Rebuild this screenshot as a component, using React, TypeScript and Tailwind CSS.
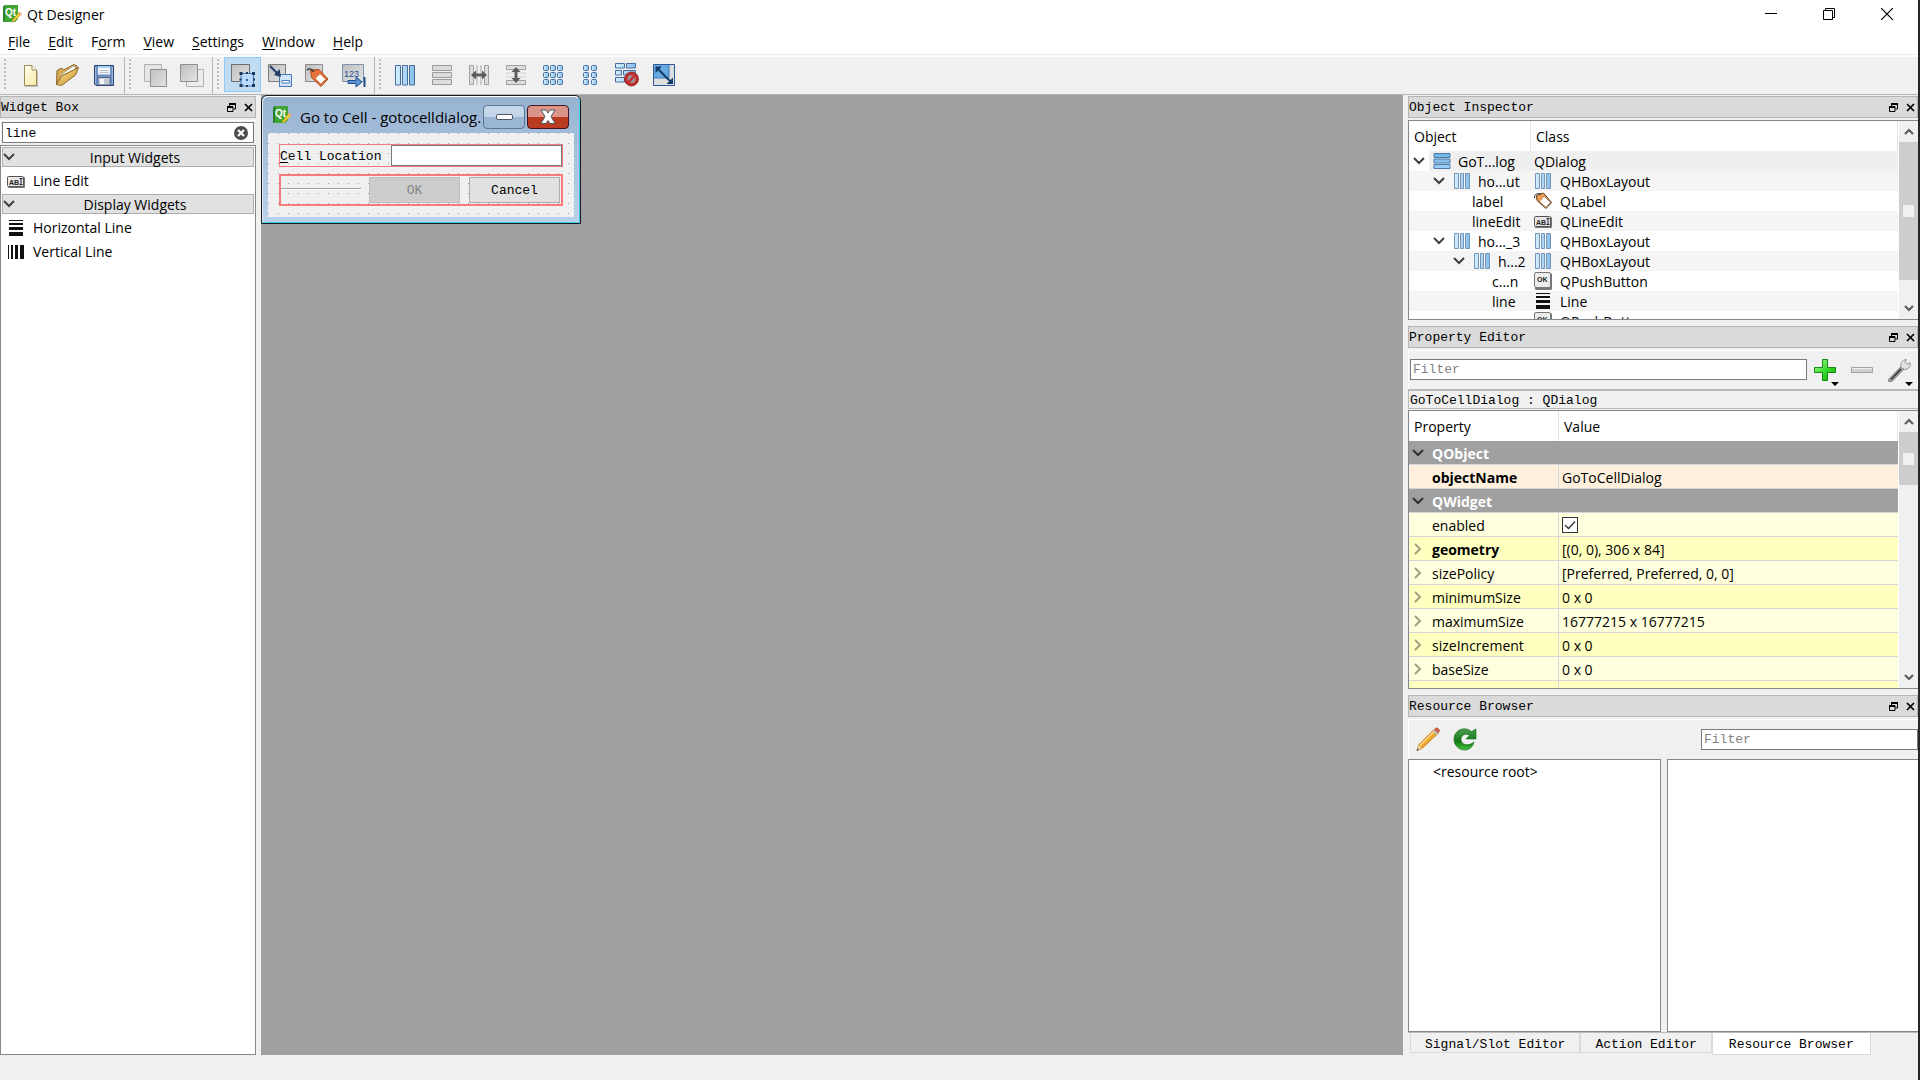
import { ReactNode, useState } from 'react';
import clsx from 'clsx';

const MONO = "font-['Liberation_Mono',monospace] text-[13px]";

const MENUS = [
  ['', 'F', 'ile'],
  ['', 'E', 'dit'],
  ['F', 'o', 'rm'],
  ['', 'V', 'iew'],
  ['', 'S', 'ettings'],
  ['', 'W', 'indow'],
  ['', 'H', 'elp'],
];

type TreeNode = {
  name: string;
  className: string;
  depth: number;
  open?: boolean;
  nameIcon?: ReactNode;
  classIcon?: ReactNode;
};

type Property = {
  name: string;
  value?: string;
  kind: 'group' | 'object' | 'light' | 'dark';
  bold?: boolean;
  expandable?: boolean;
  checkbox?: boolean;
};

const PROPERTIES: Property[] = [
  { name: 'QObject', kind: 'group' },
  { name: 'objectName', value: 'GoToCellDialog', kind: 'object', bold: true },
  { name: 'QWidget', kind: 'group' },
  { name: 'enabled', kind: 'light', checkbox: true },
  { name: 'geometry', value: '[(0, 0), 306 x 84]', kind: 'dark', bold: true, expandable: true },
  { name: 'sizePolicy', value: '[Preferred, Preferred, 0, 0]', kind: 'light', expandable: true },
  { name: 'minimumSize', value: '0 x 0', kind: 'dark', expandable: true },
  { name: 'maximumSize', value: '16777215 x 16777215', kind: 'light', expandable: true },
  { name: 'sizeIncrement', value: '0 x 0', kind: 'dark', expandable: true },
  { name: 'baseSize', value: '0 x 0', kind: 'light', expandable: true },
  { name: '', value: '', kind: 'dark' },
];

/* Icons */

const Gradients = () => (
  <svg className="absolute size-0" aria-hidden="true">
    <defs>
      <linearGradient id="blue" x1="0" x2="1" y1="0" y2="0">
        <stop offset="0" stopColor="#d5f0ff" />
        <stop offset="1" stopColor="#85bdea" />
      </linearGradient>
      <linearGradient id="blueDown" x1="0" x2="0" y1="0" y2="1">
        <stop offset="0" stopColor="#6eb4e8" />
        <stop offset="1" stopColor="#9fd2f6" />
      </linearGradient>
      <linearGradient id="gray" x1="0" x2="1" y1="0" y2="1">
        <stop offset="0" stopColor="#bfbfbf" />
        <stop offset="1" stopColor="#e3e3e3" />
      </linearGradient>
      <linearGradient id="page" x1="0" x2="1" y1="0" y2="1">
        <stop offset="0" stopColor="#fffef2" />
        <stop offset="1" stopColor="#f7e8a2" />
      </linearGradient>
      <linearGradient id="gold" x1="0" x2="1" y1="0" y2="1">
        <stop offset="0" stopColor="#f5d98b" />
        <stop offset="1" stopColor="#cf9a35" />
      </linearGradient>
      <linearGradient id="green" x1="0" x2="1" y1="0" y2="1">
        <stop offset="0" stopColor="#b6f7a0" />
        <stop offset="0.5" stopColor="#3fdc30" />
        <stop offset="1" stopColor="#00a800" />
      </linearGradient>
      <linearGradient id="reload" x1="0" x2="0" y1="0" y2="1">
        <stop offset="0" stopColor="#4f9b52" />
        <stop offset="0.6" stopColor="#117a17" />
        <stop offset="1" stopColor="#45c43c" />
      </linearGradient>
    </defs>
  </svg>
);

const Icon = ({ children, size = 24 }: { children: ReactNode; size?: number }) => (
  <svg width={size} height={size} viewBox={`0 0 ${size} ${size}`} fill="none" className="shrink-0" aria-hidden="true">
    {children}
  </svg>
);

const QtIcon = () => (
  <Icon size={20}>
    <path d="M3 1H16V15L13 18H1V3Z" fill="#41a536" />
    <path d="M1 3L3 1V16L1 18Z" fill="#2c7d26" />
    <text x="3" y="12" fontSize="10" fontWeight="bold" fill="#fff" fontFamily="Liberation Sans">
      Qt
    </text>
    <path d="M17.500 8L19.500 10L12.500 17L10 18L11 15.500Z" fill="#f5cf3a" stroke="#c99a1a" strokeWidth=".6" />
    <path d="M17.500 8L19.500 10L18.500 11L16.500 9Z" fill="#e8a0a0" />
  </Icon>
);

const NewIcon = () => (
  <Icon>
    <path d="M6.500 2.500H14L18.500 7V22.500H6.500Z" fill="url(#page)" stroke="#9b8a58" />
    <path d="M14 2.500V7H18.500" fill="#fffdf0" stroke="#9b8a58" />
    <path d="M7 23.500H19.500V8" stroke="#000" strokeOpacity=".2" />
  </Icon>
);

const OpenIcon = () => (
  <Icon>
    <path d="M1.500 21L2 7.500L6.500 5L8.500 7L19 1.500L22 3V8L6 21Z" fill="#d7aa50" stroke="#8a6425" />
    <path d="M6 12L18 3L20.500 4V9L7 19Z" fill="#f8f8f4" stroke="#a7a394" strokeWidth=".8" />
    <path d="M1.500 21.500L6.500 13L23.500 4.500L20.500 12L6.500 22.500Z" fill="url(#gold)" stroke="#8a6425" />
  </Icon>
);

const SaveIcon = () => (
  <Icon>
    <path d="M2.500 2.500H21.500V22.500H4L2.500 21Z" fill="#6d8fc4" stroke="#2c4270" />
    <path d="M6 3H18V11.500H6Z" fill="#f2f6fa" />
    <path d="M6 3H18V5H6Z" fill="#a9d7ee" />
    <path d="M7.500 7.500H16.500M7.500 9.500H16.500" stroke="#b8c2cf" />
    <path d="M6 14.500H18V22H6Z" fill="#c4cad4" stroke="#3a4f7c" strokeWidth=".7" />
    <path d="M8 16H12V21H8Z" fill="#f6f7f9" />
    <path d="M3.500 4V20.500M20.500 4V21" stroke="#9cb8e2" />
  </Icon>
);

const LowerIcon = () => (
  <Icon>
    <path d="M1.500 1.500H18.500V18.500H1.500Z" fill="#e6e6e6" stroke="#b1b1b1" />
    <path d="M7.500 6.500H23.500V23.500H7.500Z" fill="url(#gray)" stroke="#909090" />
  </Icon>
);

const RaiseIcon = () => (
  <Icon>
    <path d="M6.500 6.500H23.500V23.500H6.500Z" fill="#ececec" stroke="#b1b1b1" />
    <path d="M.5 1.500H17.500V18.500H.5Z" fill="url(#gray)" stroke="#909090" />
  </Icon>
);

const EditWidgetsIcon = () => (
  <Icon>
    <path d="M.5 1.500H18.500V18.500H.5Z" fill="url(#gray)" stroke="#6d6d6d" />
    <path d="M10 10.500H22.500V23H10Z" fill="#b9d9fb" stroke="#3f79c0" />
    <path
      d="M8.500 9h3v3h-3zM15 9h2v2h-2zM21 9h3v3h-3zM8.500 15.500h2v2h-2zM22 15.500h2v2h-2zM8.500 21h3v3h-3zM15 22h2v2h-2zM21 21h3v3h-3z"
      fill="#1d3558"
    />
    <path d="M15 16h2v2h-2z" fill="#2d62b0" />
  </Icon>
);

const SignalsIcon = () => (
  <Icon>
    <path d="M.5 1.500H17.500V18.500H.5Z" fill="url(#gray)" stroke="#7d7d7d" />
    <path d="M11.500 11.500H23.500V23.500H11.500Z" fill="#cfe3fb" stroke="#4b78b8" />
    <path d="M14 17.500H21.500V20H14Z" fill="#fff" stroke="#4b78b8" />
    <path d="M2 3L10 11" stroke="#1f3d66" strokeWidth="2" />
    <path d="M13 14L6 12L11.500 6Z" fill="#1f3d66" />
  </Icon>
);

const BuddiesIcon = () => (
  <Icon>
    <path d="M.5 1.500H17.500V18.500H.5Z" fill="url(#gray)" stroke="#8b8b8b" />
    <path d="M5.500 7L14 6.500L23 16L16 23.500L6.500 14.500Z" fill="#e8743b" stroke="#a4481c" />
    <path d="M15 10.500L20.800 16.200L16 21.300L10 15.500Z" fill="#fff" stroke="#d0602a" />
    <path d="M2 7C4 5 7 6 9 9" stroke="#333" strokeWidth="1.300" />
  </Icon>
);

const TabOrderIcon = () => (
  <Icon>
    <path d="M.5 1.500H21.500V18.500H.5Z" fill="url(#gray)" stroke="#7e93b3" />
    <text x="2" y="14" fontSize="9" fill="#1c4f94" fontFamily="Liberation Sans">
      123
    </text>
    <path d="M6 17.500H14V14L20 19L14 24V20.500H6Z" fill="#5c92d8" stroke="#234f8e" />
    <path d="M22.500 14V24" stroke="#234f8e" strokeWidth="2" />
  </Icon>
);

const HorizontalLayoutIcon = () => (
  <Icon>
    <path d="M2.500 2.500H7.500V22H2.500ZM9.500 2.500H14.500V22H9.500ZM16.500 2.500H21.500V22H16.500Z" fill="url(#blue)" stroke="#466d9e" />
  </Icon>
);

const VerticalLayoutIcon = () => (
  <Icon>
    <path d="M2.500 2.500H21.500V7.500H2.500ZM2.500 9.500H21.500V14.500H2.500ZM2.500 16.500H21.500V21.500H2.500Z" fill="#dcdcdc" stroke="#9a9a9a" />
  </Icon>
);

const HorizontalSplitterIcon = () => (
  <Icon>
    <path d="M2.500 2.500H6.500V21.500H2.500ZM17.500 2.500H21.500V21.500H17.500Z" fill="#dcdcdc" stroke="#a0a0a0" />
    <path d="M10 2V22M14 2V22" stroke="#a8a8a8" />
    <path d="M4 12L9 7.500V10.500H15V7.500L20 12L15 16.500V13.500H9V16.500Z" fill="#5c5c5c" />
  </Icon>
);

const VerticalSplitterIcon = () => (
  <Icon>
    <path d="M2.500 2.500H21.500V6.500H2.500ZM2.500 17.500H21.500V21.500H2.500Z" fill="#dcdcdc" stroke="#a0a0a0" />
    <path d="M2 10H22M2 14H22" stroke="#d0d0d0" />
    <path d="M12 4L16.500 9H13.500V15H16.500L12 20L7.500 15H10.500V9H7.500Z" fill="#5c5c5c" />
  </Icon>
);

const Cells = ({ columns }: { columns: number[] }) => (
  <>
    {columns.map((x) =>
      [2.5, 9.5, 16.5].map((y) => (
        <rect key={`${x}-${y}`} x={x} y={y} width="5" height="5" rx="1" fill="url(#blue)" stroke="#466d9e" />
      ))
    )}
  </>
);

const GridLayoutIcon = () => (
  <Icon>
    <Cells columns={[2.5, 9.5, 16.5]} />
  </Icon>
);

const FormLayoutIcon = () => (
  <Icon>
    <Cells columns={[5.5, 13.5]} />
  </Icon>
);

const BreakLayoutIcon = () => (
  <Icon>
    <path
      d="M.5.5H9.500V5H.5ZM11.500.5H20.500V5H11.500ZM.5 7.500H6.500V12H.5ZM8.500 7.500H20.500V12H8.500ZM.5 14.500H9.500V19H.5Z"
      fill="url(#blue)"
      stroke="#466d9e"
    />
    <circle cx="16.500" cy="16" r="5.500" fill="#999" stroke="#c22d2d" strokeWidth="3" />
    <path d="M13 20L20 12" stroke="#c22d2d" strokeWidth="2.500" />
    <circle cx="16.500" cy="16" r="7" stroke="#7e1c1c" strokeWidth=".7" />
  </Icon>
);

const AdjustSizeIcon = () => (
  <Icon>
    <path d="M1.500 1.500H22.500V22.500H1.500Z" fill="#dedede" stroke="#2a5a98" />
    <path d="M2 2H17V15H2Z" fill="#68abe0" />
    <path d="M2 15H17V2" stroke="#3d79b8" />
    <path d="M6 6L18.500 18.500" stroke="#123a66" strokeWidth="2" />
    <path d="M3.500 3.500H10L3.500 10ZM21 21H14.500L21 14.500Z" fill="#123a66" />
  </Icon>
);

const ColumnsIcon = () => (
  <Icon size={18}>
    <path
      d="M1.500 1.500H5.500V16.500H1.500ZM7.500 1.500H10.500V16.500H7.500ZM12.500 1.500H16.500V16.500H12.500Z"
      fill="url(#blue)"
      stroke="#7595b8"
    />
  </Icon>
);

const RowsIcon = () => (
  <Icon size={18}>
    <path d="M1 1.500H17V5.500H1ZM1 7H17V11H1ZM1 12.500H17V16.500H1Z" fill="url(#blueDown)" stroke="#4c7ba8" />
  </Icon>
);

const LabelIcon = () => (
  <Icon size={18}>
    <path d="M2.500 3.500L9.500 1L17.500 10.500L12 16.500L3 8.500Z" fill="#f0a050" stroke="#5a3c20" />
    <path d="M10 4L16.500 10.500L12 15.500L5.500 9.500Z" fill="#fff" stroke="#8c5a30" strokeWidth=".7" />
    <path d="M.5 6C.5 2 3 1 7 2" stroke="#222" />
  </Icon>
);

const LineEditIcon = ({ size = 18 }: { size?: number }) => (
  <svg width={size} height={size} viewBox="0 0 18 18" fill="none" className="shrink-0" aria-hidden="true">
    <rect x="1" y="5" width="17" height="11" rx="1" fill="#777" />
    <rect x=".5" y="4.500" width="16" height="10" rx="1" fill="#e8e8e8" stroke="#555" />
    <text x="2" y="12.500" fontSize="7" fontWeight="bold" fill="#222" fontFamily="Liberation Sans">
      AB
    </text>
    <path d="M12.500 6.500H15.500M14 6.500V12.500M12.500 12.500H15.500" stroke="#222" />
  </svg>
);

const PushButtonIcon = () => (
  <Icon size={18}>
    <rect x="1" y="1" width="17" height="17" rx="1.500" fill="#777" />
    <rect x=".5" y=".5" width="16" height="15" rx="1.500" fill="#ececec" stroke="#777" />
    <text x="3" y="10" fontSize="7" fontWeight="bold" fill="#222" fontFamily="Liberation Sans">
      OK
    </text>
  </Icon>
);

const HLineIcon = () => (
  <Icon size={18}>
    <path d="M2 1.500H16" stroke="#111" />
    <path d="M2 5H16" stroke="#111" strokeWidth="2" />
    <path d="M2 9.500H16" stroke="#111" strokeWidth="3" />
    <path d="M2 15H16" stroke="#111" strokeWidth="4" />
  </Icon>
);

const VLineIcon = () => (
  <Icon size={18}>
    <path d="M1.500 2V16" stroke="#111" />
    <path d="M5 2V16" stroke="#111" strokeWidth="2" />
    <path d="M9.500 2V16" stroke="#111" strokeWidth="3" />
    <path d="M15 2V16" stroke="#111" strokeWidth="4" />
  </Icon>
);

const Chevron = ({ className }: { className?: string }) => (
  <svg width="12" height="8" viewBox="0 0 12 8" fill="none" className={clsx('shrink-0', className)} aria-hidden="true">
    <path d="M1 1L6 6L11 1" stroke="currentColor" strokeWidth="2" />
  </svg>
);

const ScrollArrow = ({ up }: { up?: boolean }) => (
  <svg width="10" height="8" viewBox="0 0 10 8" fill="none" aria-hidden="true">
    <path d={up ? 'M1 6L5 2L9 6' : 'M1 1L5 5L9 1'} stroke="#5c5c5c" strokeWidth="2.200" />
  </svg>
);

const AddIcon = () => (
  <Icon>
    <path d="M9.500 1.500H14.500V9.500H22.500V14.500H14.500V22.500H9.500V14.500H1.500V9.500H9.500Z" fill="url(#green)" stroke="#158a15" />
  </Icon>
);

const RemoveIcon = () => (
  <Icon>
    <path d="M1.500 9.500H22.500V14.500H1.500Z" fill="#d2d2d6" stroke="#a2a2a6" />
    <path d="M2.500 10.500H21.500" stroke="#efefef" />
  </Icon>
);

const WrenchIcon = () => (
  <Icon>
    <path d="M1.500 21.500L14 8.500L17 11L5 23.500L2 24Z" fill="#a8a8a8" stroke="#7e7e7e" />
    <path d="M4 21.500L14 11" stroke="#2f2f2f" strokeWidth="1.500" />
    <path d="M14 9.500C13 6 15 2 19.500 1.500L18 4.500L20 6.500L23 4.500C24 8 21.500 11.500 17.500 11.500Z" fill="#e4e4e4" stroke="#929292" />
  </Icon>
);

const PencilIcon = () => (
  <Icon>
    <path d="M2.500 18L18 2.500L22 6.500L6 21.500L1 23.500Z" fill="#f0a829" stroke="#a8701a" strokeWidth=".7" />
    <path d="M4 18.500L18.500 4" stroke="#ffdf90" strokeWidth="1.300" />
    <path d="M2.500 18L6 21.500L1 23.500Z" fill="#e8cfa6" />
    <path d="M1.700 21.500L3 22.700L.5 24Z" fill="#333" />
    <path d="M18 2.500L20 .5Q23 0 24 4L22 6.500Z" fill="#c8604a" />
    <path d="M16.500 4L18 2.500L22 6.500L20.500 8Z" fill="#bcbcbc" />
  </Icon>
);

const ReloadIcon = () => (
  <Icon>
    <path
      d="M18.500 4.500L23 2V12H13L16.500 8.500C13 5.500 8 8 8 12.500C8 17.500 15 20 21 15C19.500 20.500 16 23 12 23C5.500 23 1 18 1 12.500C1 3 11 -1.500 18.500 4.500Z"
      fill="url(#reload)"
      stroke="#0d6813"
      strokeWidth=".6"
    />
  </Icon>
);

const FloatIcon = () => (
  <svg width="9" height="9" viewBox="0 0 9 9" fill="none" aria-hidden="true">
    <path d="M2.500 3V.5H8.500V6H6.500" stroke="#000" />
    <path d="M2 1H9" stroke="#000" strokeWidth="2" />
    <path d="M.5 3.500H6V8.500H.5Z" fill="#dadada" stroke="#000" />
    <path d="M0 4H6" stroke="#000" strokeWidth="2" />
  </svg>
);

const CrossIcon = () => (
  <svg width="9" height="9" viewBox="0 0 9 9" fill="none" aria-hidden="true">
    <path d="M1 1L8 8M8 1L1 8" stroke="#000" strokeWidth="1.700" />
  </svg>
);

const CLASS_TREE: TreeNode[] = [
  { name: 'GoT...log', className: 'QDialog', depth: 0, open: true, nameIcon: <RowsIcon /> },
  { name: 'ho...ut', className: 'QHBoxLayout', depth: 1, open: true, nameIcon: <ColumnsIcon />, classIcon: <ColumnsIcon /> },
  { name: 'label', className: 'QLabel', depth: 2, classIcon: <LabelIcon /> },
  { name: 'lineEdit', className: 'QLineEdit', depth: 2, classIcon: <LineEditIcon /> },
  { name: 'ho..._3', className: 'QHBoxLayout', depth: 1, open: true, nameIcon: <ColumnsIcon />, classIcon: <ColumnsIcon /> },
  { name: 'h...2', className: 'QHBoxLayout', depth: 2, open: true, nameIcon: <ColumnsIcon />, classIcon: <ColumnsIcon /> },
  { name: 'c...n', className: 'QPushButton', depth: 3, classIcon: <PushButtonIcon /> },
  { name: 'line', className: 'Line', depth: 3, classIcon: <HLineIcon /> },
  { name: '', className: 'QPushButton', depth: 3, classIcon: <PushButtonIcon /> },
];

const INDENTS = ['pl-0', 'pl-5', 'pl-10', 'pl-15'];

/* Window chrome */

const TitleBar = () => (
  <header className="flex h-7 items-center justify-between bg-white pr-0.5 pl-0.5">
    <div className="flex items-center gap-[5px]">
      <QtIcon />
      <h1 className="pt-0.5">Qt Designer</h1>
    </div>
    <div className="flex h-full">
      <button type="button" aria-label="Minimize" className="grid w-[58px] place-items-center">
        <svg width="12" height="12" viewBox="0 0 12 12" fill="none">
          <path d="M0 5.500H12" stroke="#000" />
        </svg>
      </button>
      <button type="button" aria-label="Restore" className="grid w-[58px] place-items-center">
        <svg width="12" height="12" viewBox="0 0 12 12" fill="none">
          <path d="M.5 2.500H9.500V11.500H.5ZM2.500 2.500V.5H11.500V9.500H9.500" stroke="#000" />
        </svg>
      </button>
      <button type="button" aria-label="Close" className="grid w-[58px] place-items-center">
        <svg width="12" height="12" viewBox="0 0 12 12" fill="none">
          <path d="M0 0L12 12M12 0L0 12" stroke="#000" strokeWidth="1.200" />
        </svg>
      </button>
    </div>
  </header>
);

const MenuBar = () => (
  <nav className="flex h-[27px] items-center gap-[18px] border-b border-[#ececec] bg-white px-2 pt-0.5">
    {MENUS.map(([before, key, after]) => (
      <button key={before + key + after} type="button">
        {before}
        <span className="underline underline-offset-2">{key}</span>
        {after}
      </button>
    ))}
  </nav>
);

const ToolBar = ({ children, last }: { children: ReactNode; last?: boolean }) => (
  <div className={clsx('flex items-start pr-0.5', !last && 'border-r border-[#b5b5b5]')}>
    <div className="mt-0.5 mr-[5px] ml-1 h-8 w-0.5 bg-[repeating-linear-gradient(#bcbcbc_0_2px,transparent_2px_4px)]" />
    {children}
  </div>
);

const ToolButton = ({
  label,
  active,
  disabled,
  children,
}: {
  label: string;
  active?: boolean;
  disabled?: boolean;
  children: ReactNode;
}) => (
  <button
    type="button"
    aria-label={label}
    aria-pressed={active}
    disabled={disabled}
    className={clsx(
      'grid h-[35px] w-[37px] place-items-center border',
      active ? 'border-[#90c8f6] bg-[#c0dcf3]' : 'border-transparent'
    )}
  >
    {children}
  </button>
);

const ToolBars = () => (
  <div className="flex h-10 border-t-2 border-b border-t-white border-b-[#b5b5b5]">
    <ToolBar>
      <ToolButton label="New">
        <NewIcon />
      </ToolButton>
      <ToolButton label="Open">
        <OpenIcon />
      </ToolButton>
      <ToolButton label="Save">
        <SaveIcon />
      </ToolButton>
    </ToolBar>
    <ToolBar>
      <ToolButton label="Send to back" disabled>
        <LowerIcon />
      </ToolButton>
      <ToolButton label="Bring to front" disabled>
        <RaiseIcon />
      </ToolButton>
    </ToolBar>
    <ToolBar>
      <ToolButton label="Edit widgets" active>
        <EditWidgetsIcon />
      </ToolButton>
      <ToolButton label="Edit signals/slots">
        <SignalsIcon />
      </ToolButton>
      <ToolButton label="Edit buddies">
        <BuddiesIcon />
      </ToolButton>
      <ToolButton label="Edit tab order">
        <TabOrderIcon />
      </ToolButton>
    </ToolBar>
    <ToolBar last>
      <ToolButton label="Lay out horizontally">
        <HorizontalLayoutIcon />
      </ToolButton>
      <ToolButton label="Lay out vertically" disabled>
        <VerticalLayoutIcon />
      </ToolButton>
      <ToolButton label="Lay out horizontally in splitter" disabled>
        <HorizontalSplitterIcon />
      </ToolButton>
      <ToolButton label="Lay out vertically in splitter" disabled>
        <VerticalSplitterIcon />
      </ToolButton>
      <ToolButton label="Lay out in a grid">
        <GridLayoutIcon />
      </ToolButton>
      <ToolButton label="Lay out in a form layout">
        <FormLayoutIcon />
      </ToolButton>
      <ToolButton label="Break layout">
        <BreakLayoutIcon />
      </ToolButton>
      <ToolButton label="Adjust size">
        <AdjustSizeIcon />
      </ToolButton>
    </ToolBar>
  </div>
);

const DockTitle = ({ title }: { title: string }) => (
  <div className="flex h-[22px] shrink-0 items-center border border-[#b5b5b5] bg-[#dadada] pr-0.5">
    <h2 className={clsx(MONO, 'flex-1 pt-0.5')}>{title}</h2>
    <div className="flex gap-2">
      <button type="button" aria-label={`Float ${title}`}>
        <FloatIcon />
      </button>
      <button type="button" aria-label={`Close ${title}`}>
        <CrossIcon />
      </button>
    </div>
  </div>
);

const ScrollBar = ({ thumbClass }: { thumbClass: string }) => (
  <div className="flex w-5 shrink-0 flex-col border-l border-white bg-[#f0f0f0]">
    <button type="button" aria-label="Scroll up" className="grid h-[21px] place-items-center">
      <ScrollArrow up />
    </button>
    <div className="flex-1">
      <div className={clsx('grid place-items-center bg-[#cdcdcd]', thumbClass)}>
        <div className="h-3 w-[11px] bg-[#f0f0f0]" />
      </div>
    </div>
    <button type="button" aria-label="Scroll down" className="grid h-[21px] place-items-center">
      <ScrollArrow />
    </button>
  </div>
);

/* Left dock */

const Category = ({ title }: { title: string }) => (
  <h3 className="mx-px mt-px mb-0.5 flex h-5 items-center border border-[#adadad] bg-[#e1e1e1]">
    <Chevron className="text-[#404040]" />
    <span className="flex-1 pt-0.5 pl-0.5 text-center">{title}</span>
  </h3>
);

const WidgetItem = ({ icon, name }: { icon: ReactNode; name: string }) => (
  <li className="flex h-6 items-center gap-2 pl-1.5">
    {icon}
    {name}
  </li>
);

const WidgetBox = () => {
  const [filter, setFilter] = useState('line');

  return (
    <aside className="flex w-64 shrink-0 flex-col pt-px">
      <DockTitle title="Widget Box" />
      <div className="mt-0.5 border-t border-l border-white px-px py-px pr-0.5">
        <div className="flex h-[21px] items-center border border-[#7a7a7a] bg-white pr-1 pl-0.5">
          <input
            aria-label="Filter widgets"
            value={filter}
            onChange={(e) => setFilter(e.target.value)}
            className={clsx(MONO, 'w-0 flex-1 pt-0.5 outline-none')}
          />
          <button type="button" aria-label="Clear filter" onClick={() => setFilter('')}>
            <Icon size={16}>
              <circle cx="8" cy="8" r="7" fill="#4d4d4d" />
              <path d="M5 5L11 11M11 5L5 11" stroke="#fff" strokeWidth="2.200" />
            </Icon>
          </button>
        </div>
      </div>
      <div className="mt-px flex-1 border border-[#828790] bg-white">
        <Category title="Input Widgets" />
        <ul>
          <WidgetItem icon={<LineEditIcon />} name="Line Edit" />
        </ul>
        <Category title="Display Widgets" />
        <ul>
          <WidgetItem icon={<HLineIcon />} name="Horizontal Line" />
          <WidgetItem icon={<VLineIcon />} name="Vertical Line" />
        </ul>
      </div>
    </aside>
  );
};

/* Form being designed */

const FormWindow = () => (
  <section className="flex w-80 flex-col rounded-t-md border border-[#1a1a1a] bg-[#b9d1ea]">
    <div className="flex flex-1 flex-col rounded-t-md border border-t-white border-r-[#39d0f0] border-b-[#39d0f0] border-l-[#dce9f5] bg-linear-to-b from-[#98b3d1] to-[#b9d1ea] px-[5px] pb-[5px]">
      <div className="flex h-9 items-center pr-[5px] pl-1">
        <QtIcon />
        <h2 className="ml-2 w-0 flex-1 pt-1 text-[15px] whitespace-nowrap">Go to Cell - gotocelldialog.</h2>
        <button
          type="button"
          aria-label="Minimize form"
          className="mt-1 grid h-6 w-[42px] place-items-center rounded-sm border border-[#5a7596] bg-linear-to-b from-[#c3d6ea] from-50% to-[#9bb6d4] to-50%"
        >
          <span className="h-1.5 w-[17px] rounded-xs border border-[#535666] bg-white" />
        </button>
        <button
          type="button"
          aria-label="Close form"
          className="mt-1 ml-0.5 grid h-6 w-[42px] place-items-center rounded-sm border border-[#431422] bg-linear-to-b from-[#dd9488] from-50% to-[#b83b22] to-50%"
        >
          <Icon size={18}>
            <path d="M2 2H7L9 5L11 2H16L12 8.500L16 15.500H11L9 12.500L7 15.500H2L6 8.500Z" fill="#fff" stroke="#535666" />
          </Icon>
        </button>
      </div>
      <div className="flex flex-col gap-[7px] bg-[#f0f0f0] bg-[conic-gradient(from_270deg_at_1px_1px,#a0a0a0_90deg,transparent_0)] bg-[size:10px_10px] p-[11px]">
        <div className="flex h-[23px] items-center border border-[#f87a7a]">
          <label htmlFor="cell-location" className={clsx(MONO, 'flex-1 pt-0.5 whitespace-nowrap')}>
            <span className="underline underline-offset-2">C</span>ell Location
          </label>
          <input id="cell-location" className="h-[21px] w-[171px] border border-[#7a7a7a] bg-white px-1 outline-none" />
        </div>
        <div className={clsx(MONO, 'flex h-8 items-center border-2 border-[#f87a7a] pr-px')}>
          <div className="mb-0.5 h-0.5 w-20 border-t border-b border-t-[#a0a0a0] border-b-white" />
          <button
            type="button"
            disabled
            className="ml-2 h-[26px] flex-1 border border-[#bfbfbf] bg-[#cccccc] pt-0.5 text-[#838383]"
          >
            OK
          </button>
          <button type="button" className="ml-[9px] h-[26px] flex-1 border border-[#adadad] bg-[#e1e1e1] pt-0.5">
            Cancel
          </button>
        </div>
      </div>
    </div>
  </section>
);

/* Right docks */

const ObjectInspector = () => (
  <section className="flex flex-col gap-0.5">
    <DockTitle title="Object Inspector" />
    <div className="flex h-[200px] overflow-hidden border border-r-0 border-[#828790] bg-white">
      <div className="flex-1">
        <table className="w-full table-fixed border-separate border-spacing-0">
          <thead>
            <tr className="h-[30px] text-left">
              <th className="w-[122px] border-r border-[#e5e5e5] pt-0.5 pl-[5px] font-normal">Object</th>
              <th className="border-r border-[#e5e5e5] pt-0.5 pl-[5px] font-normal">Class</th>
            </tr>
          </thead>
          <tbody>
            {CLASS_TREE.map((node, i) => (
              <tr key={i} className={clsx('h-5', i === 0 ? 'bg-[#efefef]' : i % 2 === 1 && 'bg-[#f5f5f5]')}>
                <td className="p-0">
                  <div className={clsx('flex h-5 items-center', INDENTS[node.depth])}>
                    {node.open ? (
                      <span className={clsx('grid h-5 w-5 shrink-0 place-items-center', i === 0 && 'bg-white')}>
                        <Chevron className="text-[#404040]" />
                      </span>
                    ) : (
                      <span className="w-5 shrink-0" />
                    )}
                    {node.nameIcon && <span className="mx-1">{node.nameIcon}</span>}
                    <span className={clsx('pt-0.5 whitespace-nowrap', node.nameIcon ? 'pl-[3px]' : 'pl-[3px]')}>
                      {node.name}
                    </span>
                  </div>
                </td>
                <td className="p-0">
                  <div className="flex h-5 items-center gap-2 pl-[3px]">
                    {node.classIcon}
                    <span className="pt-0.5">{node.className}</span>
                  </div>
                </td>
              </tr>
            ))}
          </tbody>
        </table>
      </div>
      <ScrollBar thumbClass="h-[138px]" />
    </div>
  </section>
);

const MenuArrow = () => (
  <svg width="8" height="4" viewBox="0 0 8 4" className="absolute -right-0.5 bottom-0" aria-hidden="true">
    <path d="M0 0H8L4 4Z" fill="#000" />
  </svg>
);

const ROW_COLORS = {
  group: 'bg-[#a0a0a0] font-bold text-white',
  object: 'bg-[#fff0dd]',
  light: 'bg-[#ffffdd]',
  dark: 'bg-[#ffffbf]',
};

const PropertyRow = ({ property }: { property: Property }) => {
  const isGroup = property.kind === 'group';

  return (
    <tr className={clsx('h-6', ROW_COLORS[property.kind])}>
      <td
        colSpan={isGroup ? 2 : 1}
        className={clsx('border-b border-[#d5d5dc] p-0', !isGroup && 'border-r', property.bold && 'font-bold')}
      >
        <div className="flex h-[23px] items-center pl-[3px]">
          <span className="w-5 shrink-0">
            {isGroup && <Chevron className="text-[#303030]" />}
            {property.expandable && <Chevron className="-rotate-90 text-[#a0a080]" />}
          </span>
          <span className="pt-0.5">{property.name}</span>
        </div>
      </td>
      {!isGroup && (
        <td className="border-b border-[#d5d5dc] p-0">
          <div className="flex h-[23px] items-center pl-[3px]">
            {property.checkbox ? (
              <label className="relative block size-4">
                <input
                  type="checkbox"
                  aria-label={property.name}
                  defaultChecked
                  className="peer block size-4 appearance-none border border-[#333] bg-white"
                />
                <svg
                  width="16"
                  height="16"
                  viewBox="0 0 16 16"
                  fill="none"
                  className="pointer-events-none absolute inset-0 hidden peer-checked:block"
                >
                  <path d="M3 8L6.500 11.500L13 4.500" stroke="#333" strokeWidth="1.300" />
                </svg>
              </label>
            ) : (
              <span className="pt-0.5">{property.value}</span>
            )}
          </div>
        </td>
      )}
    </tr>
  );
};

const PropertyEditor = () => (
  <section className="flex flex-col">
    <DockTitle title="Property Editor" />
    <div className="mt-0.5 flex h-[39px] items-center border-t border-l border-white pr-[7px] pb-px pl-px">
      <input
        aria-label="Filter properties"
        placeholder="Filter"
        className={clsx(
          MONO,
          'h-[21px] w-0 flex-1 border border-[#7a7a7a] bg-white px-0.5 outline-none placeholder:text-[#838383]'
        )}
      />
      <div className="flex items-center gap-[13px] pl-1.5">
        <button type="button" aria-label="Add dynamic property" className="relative py-1">
          <AddIcon />
          <MenuArrow />
        </button>
        <button type="button" aria-label="Remove dynamic property" disabled>
          <RemoveIcon />
        </button>
        <button type="button" aria-label="Configure property editor" className="relative py-1">
          <WrenchIcon />
          <MenuArrow />
        </button>
      </div>
    </div>
    <p className={clsx(MONO, 'flex h-5 items-center border-t-2 border-b border-l border-[#b9b9b9] pt-0.5 pl-px')}>
      GoToCellDialog : QDialog
    </p>
    <div className="mt-px flex h-[279px] overflow-hidden border border-r-0 border-[#828790] bg-white">
      <div className="flex-1">
        <table className="w-full table-fixed border-separate border-spacing-0">
          <thead>
            <tr className="h-[30px] text-left">
              <th className="w-[150px] border-r border-[#e5e5e5] pt-0.5 pl-[5px] font-normal">Property</th>
              <th className="border-r border-[#e5e5e5] pt-0.5 pl-[5px] font-normal">Value</th>
            </tr>
          </thead>
          <tbody>
            {PROPERTIES.map((property, i) => (
              <PropertyRow key={i} property={property} />
            ))}
          </tbody>
        </table>
      </div>
      <ScrollBar thumbClass="h-[53px]" />
    </div>
  </section>
);

const TABS = ['Signal/Slot Editor', 'Action Editor', 'Resource Browser'];

const ResourceBrowser = () => {
  const [tab, setTab] = useState('Resource Browser');

  return (
    <section className="flex flex-1 flex-col">
      <DockTitle title="Resource Browser" />
      <div className="mt-0.5 flex h-10 items-center border-t border-l border-white pb-px">
        <div className="flex flex-1 items-center gap-[13px] pl-[7px]">
          <button type="button" aria-label="Edit resources">
            <PencilIcon />
          </button>
          <button type="button" aria-label="Reload">
            <ReloadIcon />
          </button>
        </div>
        <input
          aria-label="Filter resources"
          placeholder="Filter"
          className={clsx(
            MONO,
            'h-[21px] w-[217px] border border-[#7a7a7a] bg-white px-0.5 outline-none placeholder:text-[#838383]'
          )}
        />
      </div>
      <div className="flex flex-1 gap-1.5">
        <div className="w-[253px] border border-[#828790] bg-white pt-0.5 pl-6">&lt;resource root&gt;</div>
        <div className="flex-1 border border-r-0 border-[#828790] bg-white" />
      </div>
      <div role="tablist" className={clsx(MONO, 'flex h-[23px] items-start border-t border-[#b9b9b9] pl-0.5')}>
        {TABS.map((name) => (
          <button
            key={name}
            type="button"
            role="tab"
            aria-selected={tab === name}
            onClick={() => setTab(name)}
            className={clsx(
              'border border-t-0 border-[#d9d9d9] pt-0.5',
              tab === name ? 'h-[22px] bg-white px-4' : 'h-5 px-3.5'
            )}
          >
            {name}
          </button>
        ))}
      </div>
    </section>
  );
};

export default function App() {
  return (
    <div className="flex h-screen w-full flex-col overflow-hidden border-r-2 border-[#262626] bg-[#f0f0f0] font-['Open_Sans','Noto_Sans',sans-serif] text-sm leading-5 text-black">
      <Gradients />
      <TitleBar />
      <MenuBar />
      <ToolBars />
      <main className="flex min-h-0 flex-1">
        <WidgetBox />
        <div className="ml-[5px] min-w-0 flex-1 bg-[#a0a0a0]">
          <FormWindow />
        </div>
        <aside className="ml-[5px] flex w-[510px] shrink-0 flex-col gap-1.5 pt-px">
          <ObjectInspector />
          <PropertyEditor />
          <ResourceBrowser />
        </aside>
      </main>
      <footer className="h-[25px] shrink-0" />
    </div>
  );
}
